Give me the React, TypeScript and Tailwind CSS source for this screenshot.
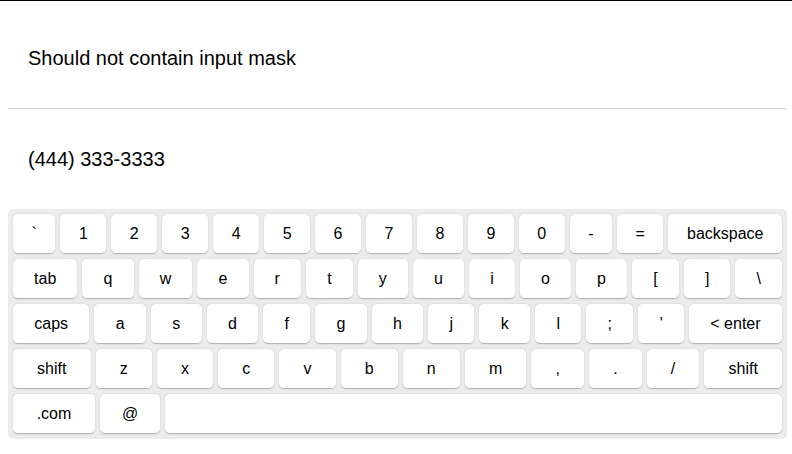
const rows: string[][] = [
  ["`", "1", "2", "3", "4", "5", "6", "7", "8", "9", "0", "-", "=", "backspace"],
  ["tab", "q", "w", "e", "r", "t", "y", "u", "i", "o", "p", "[", "]", "\\"],
  ["caps", "a", "s", "d", "f", "g", "h", "j", "k", "l", ";", "'", "< enter"],
  ["shift", "z", "x", "c", "v", "b", "n", "m", ",", ".", "/", "shift"],
  [".com", "@", " "],
]

const capFor = (label: string) => {
  if (label === ".com") return "max-w-[82px]"
  if (label === "@") return "max-w-[60px]"
  return ""
}

function Key({ label }: { label: string }) {
  return (
    <div
      className={`flex h-[40px] grow basis-auto items-center justify-center whitespace-pre rounded-[5px] border-b border-[#b5b5b5] bg-white px-[5px] shadow-[0_0_3px_-1px_rgba(0,0,0,0.3)] ${capFor(label)}`}
    >
      {label}
    </div>
  )
}

export default function App() {
  return (
    <div className="min-h-[454px] w-[792px] border-t border-black bg-white font-['Liberation_Sans',Arial,sans-serif] text-black">
      <div className="pl-[8px] pr-[5px] pt-[7px]">
        <input
          readOnly
          value="Should not contain input mask"
          className="box-content block h-[100px] w-[739px] border-b border-[#d3d3d3] px-[20px] text-[20px] text-black outline-none"
        />
        <input
          readOnly
          value="(444) 333-3333"
          className="box-content block h-[100px] w-[739px] px-[20px] text-[20px] text-black outline-none"
        />
        <div className="flex flex-col gap-[5px] rounded-[5px] bg-[#ececec] p-[5px] text-[16px]">
          {rows.map((row, i) => (
            <div key={i} className="flex gap-[5px]">
              {row.map((label, j) => (
                <Key key={`${i}-${j}`} label={label} />
              ))}
            </div>
          ))}
        </div>
      </div>
    </div>
  )
}
